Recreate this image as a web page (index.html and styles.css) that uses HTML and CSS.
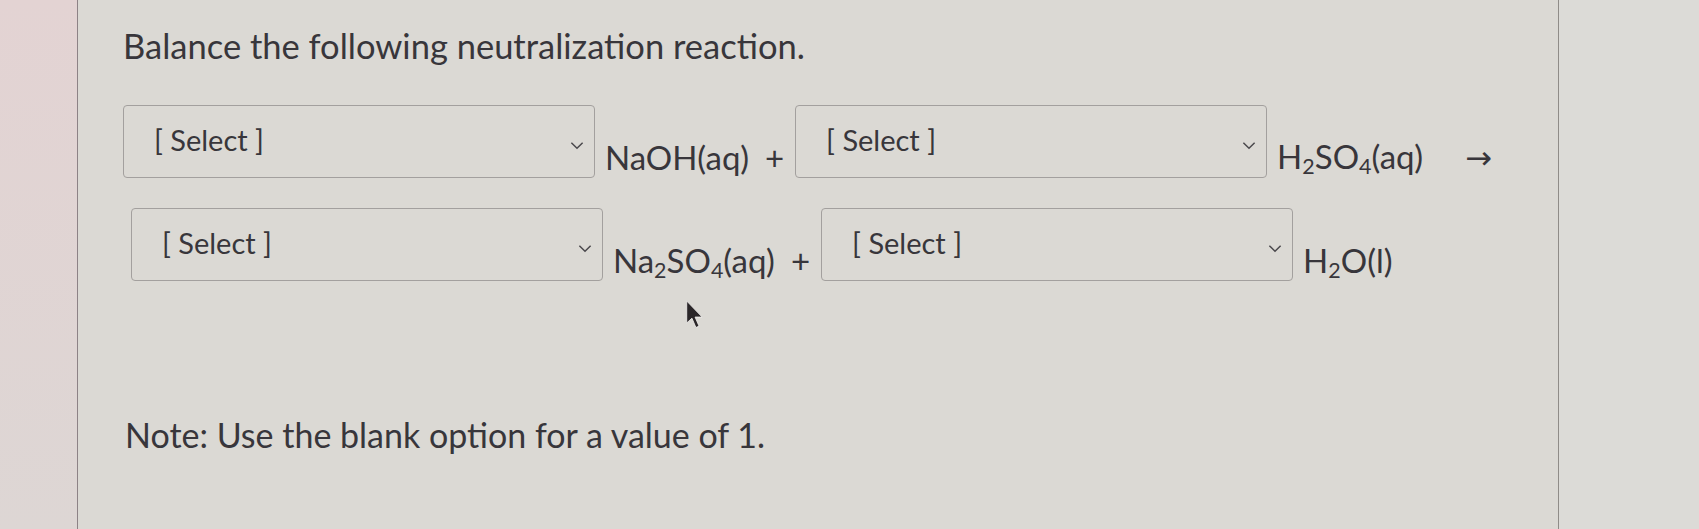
FILE: index.html
```html
<!DOCTYPE html>
<html lang="en">

<head>
    <meta charset="UTF-8">
    <meta name="viewport" content="width=device-width, initial-scale=1.0">
    <title>Balance the following neutralization reaction</title>
    <link rel="stylesheet" href="styles.css">
</head>

<body>
    <section class="page">
        <section class="gutter"></section>

        <section class="question">
            <p class="question-text">Balance the following neutralization reaction.</p>

            <!-- one row per line of the equation -->
            <section class="equation-row row-one">
                <section class="select-box">
                    <span>[ Select ]</span>
                    <svg class="chevron" viewBox="0 0 12 8"><path d="M1 1.5 L6 6.5 L11 1.5" /></svg>
                </section>
                <span class="chem">NaOH(aq)<span class="plus">+</span></span>
                <section class="select-box">
                    <span>[ Select ]</span>
                    <svg class="chevron" viewBox="0 0 12 8"><path d="M1 1.5 L6 6.5 L11 1.5" /></svg>
                </section>
                <span class="chem">H<sub>2</sub>SO<sub>4</sub>(aq)<span class="arrow">&rarr;</span></span>
            </section>

            <section class="equation-row row-two">
                <section class="select-box">
                    <span>[ Select ]</span>
                    <svg class="chevron" viewBox="0 0 12 8"><path d="M1 1.5 L6 6.5 L11 1.5" /></svg>
                </section>
                <span class="chem">Na<sub>2</sub>SO<sub>4</sub>(aq)<span class="plus">+</span></span>
                <section class="select-box">
                    <span>[ Select ]</span>
                    <svg class="chevron" viewBox="0 0 12 8"><path d="M1 1.5 L6 6.5 L11 1.5" /></svg>
                </section>
                <span class="chem">H<sub>2</sub>O(l)</span>
            </section>

            <p class="note">Note: Use the blank option for a value of 1.</p>
        </section>

        <section class="side"></section>
    </section>

    <svg class="cursor" viewBox="0 0 12 20">
        <path d="M0.5 0.5 L0.5 16 L4.2 12.6 L7 19.2 L9.2 18.2 L6.4 11.8 L11.4 11.8 Z" />
    </svg>
</body>

</html>
```

FILE: styles.css
```css
body {
    margin: 0;
    padding: 0;
    height: 100vh;
    overflow: hidden;
    background-color: #dbd9d4;
    font-family: Lato, "Open Sans", sans-serif;
    color: #38363b;
}

.page {
    display: flex;
    height: 100vh;
}

.gutter {
    width: 77px;
    border-right: 1px solid #8d8286;
    background: linear-gradient(to bottom, #e3d3d3, #ddd6d4);
}

.question {
    flex: 1;
    padding: 25px 0 0 45px;
}

.question-text {
    margin: 0;
    font-size: 34.5px;
    line-height: 42px;
}

.equation-row {
    display: flex;
    align-items: flex-end;
}

.row-one {
    margin-top: 38px;
}

.row-two {
    margin-top: 30px;
    padding-left: 8px;
}

.select-box {
    position: relative;
    width: 472px;
    height: 73px;
    box-sizing: border-box;
    border: 1px solid #a3a09e;
    border-radius: 4px;
    display: flex;
    align-items: center;
    padding: 0 0 4px 30px;
    font-size: 29px;
}

.chevron {
    position: absolute;
    right: 10px;
    top: 35px;
    width: 14px;
    height: 9px;
    fill: none;
    stroke: #4a484c;
    stroke-width: 1.3;
}

.chem {
    font-size: 33px;
    line-height: 1;
    margin: 0 11px 4px 10px;
    white-space: nowrap;
}

.chem sub {
    font-size: 65%;
    vertical-align: -0.25em;
    line-height: 0;
}

.plus {
    margin-left: 16px;
}

.arrow {
    margin-left: 42px;
    font-family: "DejaVu Sans", sans-serif;
    font-size: 32px;
}

.note {
    margin: 133px 0 0 2px;
    font-size: 34px;
    line-height: 42px;
}

.side {
    width: 140px;
    border-left: 1px solid #8f8c88;
    background-color: #dcdbd7;
}

.cursor {
    position: absolute;
    left: 686px;
    top: 300px;
    width: 17px;
    height: 29px;
    fill: #2a2628;
    stroke: #f0efec;
    stroke-width: 0.6;
}
```
